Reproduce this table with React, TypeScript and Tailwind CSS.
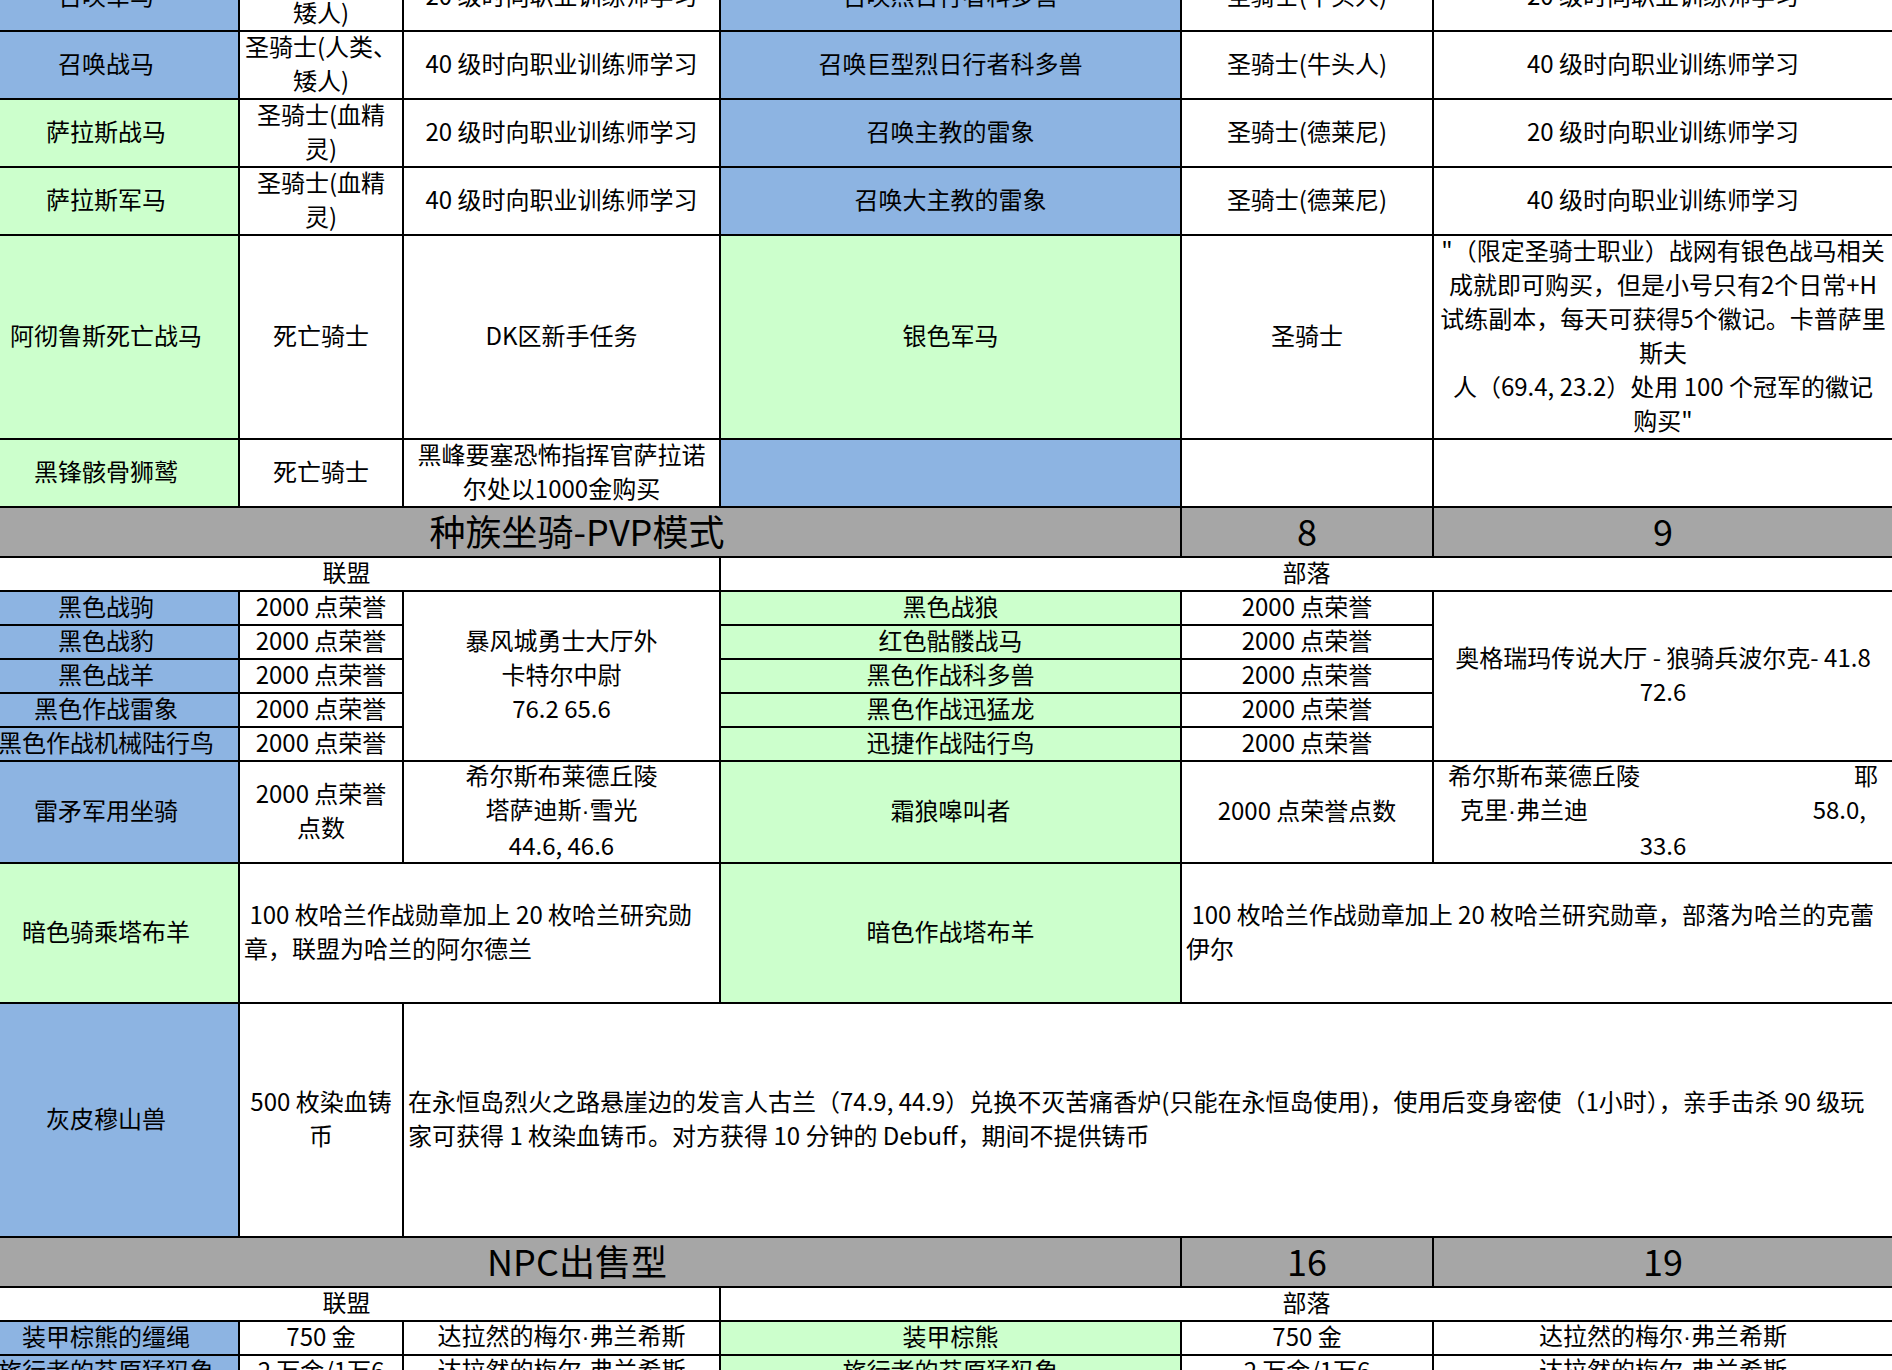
import type { ReactNode } from "react";

const BLUE = "bg-[#8db4e2]";
const GREEN = "bg-[#ccffcc]";
const GRAY = "bg-[#a6a6a6]";
const WHITE = "bg-white";

// the CJK font draws "·" full width; the sheet shows a narrow dot
function Text({ s }: { s: string }) {
  const parts = s.split("·");
  return (
    <>
      {parts.map((p, i) => (
        <span key={i}>
          {i > 0 && <span style={{ fontFamily: '"Liberation Sans", sans-serif' }}>·</span>}
          {p}
        </span>
      ))}
    </>
  );
}

type CellProps = {
  bg?: string;
  span?: string;
  left?: boolean;
  lines?: string[];
  children?: ReactNode;
};

// one sheet cell; lines are given explicitly so wrapping matches the sheet
function Cell({ bg = WHITE, span = "", left = false, lines, children }: CellProps) {
  const align = left ? "items-start text-left px-[4px]" : "items-center text-center px-[2px]";
  return (
    <div className={`${bg} ${span} flex flex-col justify-center overflow-hidden pb-[4px] ${align}`}>
      {lines
        ? lines.map((l, i) => (
            <span key={i} className="whitespace-pre leading-[34px]">
              <Text s={l} />
            </span>
          ))
        : children}
    </div>
  );
}

function Head({ span = "", children }: { span?: string; children: ReactNode }) {
  return (
    <div className={`${GRAY} ${span} flex items-center justify-center pb-[5px] text-[36px] leading-[44px]`}>
      {children}
    </div>
  );
}

const t = (s: string) => [s];

const honorRows: [string, string][] = [
  ["黑色战驹", "黑色战狼"],
  ["黑色战豹", "红色骷髅战马"],
  ["黑色战羊", "黑色作战科多兽"],
  ["黑色作战雷象", "黑色作战迅猛龙"],
  ["黑色作战机械陆行鸟", "迅捷作战陆行鸟"],
];

export default function App() {
  return (
    <div
      className="w-[1892px] h-[1370px] overflow-hidden bg-white text-black text-[24px]"
      style={{ fontFamily: '"Noto Sans CJK SC", "Noto Sans", sans-serif' }}
    >
      <div className="-mt-[36px] -ml-[26px] w-[1918px] grid gap-[2px] bg-black grid-cols-[264px_162px_315px_459px_250px_458px] grid-rows-[66px_66px_66px_66px_202px_66px_48px_32px_32px_32px_32px_32px_32px_100px_138px_232px_48px_32px_32px_32px]">
        {/* class mounts */}
        <Cell bg={BLUE} lines={t("召唤军马")} />
        <Cell lines={["圣骑士(人类、", "矮人)"]} />
        <Cell lines={t("20 级时向职业训练师学习")} />
        <Cell bg={BLUE} lines={t("召唤烈日行者科多兽")} />
        <Cell lines={t("圣骑士(牛头人)")} />
        <Cell lines={t("20 级时向职业训练师学习")} />

        <Cell bg={BLUE} lines={t("召唤战马")} />
        <Cell lines={["圣骑士(人类、", "矮人)"]} />
        <Cell lines={t("40 级时向职业训练师学习")} />
        <Cell bg={BLUE} lines={t("召唤巨型烈日行者科多兽")} />
        <Cell lines={t("圣骑士(牛头人)")} />
        <Cell lines={t("40 级时向职业训练师学习")} />

        <Cell bg={GREEN} lines={t("萨拉斯战马")} />
        <Cell lines={["圣骑士(血精", "灵)"]} />
        <Cell lines={t("20 级时向职业训练师学习")} />
        <Cell bg={BLUE} lines={t("召唤主教的雷象")} />
        <Cell lines={t("圣骑士(德莱尼)")} />
        <Cell lines={t("20 级时向职业训练师学习")} />

        <Cell bg={GREEN} lines={t("萨拉斯军马")} />
        <Cell lines={["圣骑士(血精", "灵)"]} />
        <Cell lines={t("40 级时向职业训练师学习")} />
        <Cell bg={BLUE} lines={t("召唤大主教的雷象")} />
        <Cell lines={t("圣骑士(德莱尼)")} />
        <Cell lines={t("40 级时向职业训练师学习")} />

        <Cell bg={GREEN} lines={t("阿彻鲁斯死亡战马")} />
        <Cell lines={t("死亡骑士")} />
        <Cell lines={t("DK区新手任务")} />
        <Cell bg={GREEN} lines={t("银色军马")} />
        <Cell lines={t("圣骑士")} />
        <Cell
          lines={[
            "\"（限定圣骑士职业）战网有银色战马相关",
            "成就即可购买，但是小号只有2个日常+H",
            "试练副本，每天可获得5个徽记。卡普萨里",
            "斯夫",
            "人（69.4, 23.2）处用 100 个冠军的徽记",
            "购买\"",
          ]}
        />

        <Cell bg={GREEN} lines={t("黑锋骸骨狮鹫")} />
        <Cell lines={t("死亡骑士")} />
        <Cell lines={["黑峰要塞恐怖指挥官萨拉诺", "尔处以1000金购买"]} />
        <Cell bg={BLUE} />
        <Cell />
        <Cell />

        {/* PvP */}
        <Head span="col-span-4">种族坐骑-PVP模式</Head>
        <Head>8</Head>
        <Head>9</Head>

        <Cell span="col-span-3" lines={t("联盟")} />
        <Cell span="col-span-3" lines={t("部落")} />

        {honorRows.map(([a, h], i) => (
          <HonorRow key={i} first={i === 0} alliance={a} horde={h} />
        ))}

        <Cell bg={BLUE} lines={t("雷矛军用坐骑")} />
        <Cell lines={["2000 点荣誉", "点数"]} />
        <Cell lines={["希尔斯布莱德丘陵", "塔萨迪斯·雪光", "44.6, 46.6"]} />
        <Cell bg={GREEN} lines={t("霜狼嗥叫者")} />
        <Cell lines={t("2000 点荣誉点数")} />
        <div className="bg-white flex flex-col justify-center pb-[4px] px-[14px] leading-[34px] whitespace-nowrap">
          <div className="flex justify-between">
            <span>希尔斯布莱德丘陵</span>
            <span>耶</span>
          </div>
          <div className="flex justify-between px-[12px]">
            <span>
              <Text s="克里·弗兰迪" />
            </span>
            <span>58.0,</span>
          </div>
          <div className="text-center">33.6</div>
        </div>

        <Cell bg={GREEN} lines={t("暗色骑乘塔布羊")} />
        <Cell
          span="col-span-2"
          left
          lines={[" 100 枚哈兰作战勋章加上 20 枚哈兰研究勋", "章，联盟为哈兰的阿尔德兰"]}
        />
        <Cell bg={GREEN} lines={t("暗色作战塔布羊")} />
        <Cell
          span="col-span-2"
          left
          lines={[" 100 枚哈兰作战勋章加上 20 枚哈兰研究勋章，部落为哈兰的克蕾", "伊尔"]}
        />

        <Cell bg={BLUE} lines={t("灰皮穆山兽")} />
        <Cell lines={["500 枚染血铸", "币"]} />
        <Cell
          span="col-span-4"
          left
          lines={[
            "在永恒岛烈火之路悬崖边的发言人古兰（74.9, 44.9）兑换不灭苦痛香炉(只能在永恒岛使用)，使用后变身密使（1小时），亲手击杀 90 级玩",
            "家可获得 1 枚染血铸币。对方获得 10 分钟的 Debuff，期间不提供铸币",
          ]}
        />

        {/* NPC vendors */}
        <Head span="col-span-4">NPC出售型</Head>
        <Head>16</Head>
        <Head>19</Head>

        <Cell span="col-span-3" lines={t("联盟")} />
        <Cell span="col-span-3" lines={t("部落")} />

        <Cell bg={BLUE} lines={t("装甲棕熊的缰绳")} />
        <Cell lines={t("750 金")} />
        <Cell lines={t("达拉然的梅尔·弗兰希斯")} />
        <Cell bg={GREEN} lines={t("装甲棕熊")} />
        <Cell lines={t("750 金")} />
        <Cell lines={t("达拉然的梅尔·弗兰希斯")} />

        <Cell bg={BLUE} lines={t("旅行者的苔原猛犸象")} />
        <Cell lines={t("2 万金/1万6")} />
        <Cell lines={t("达拉然的梅尔·弗兰希斯")} />
        <Cell bg={GREEN} lines={t("旅行者的苔原猛犸象")} />
        <Cell lines={t("2 万金/1万6")} />
        <Cell lines={t("达拉然的梅尔·弗兰希斯")} />
      </div>
    </div>
  );
}

function HonorRow({ first, alliance, horde }: { first: boolean; alliance: string; horde: string }) {
  return (
    <>
      <Cell bg={BLUE} lines={t(alliance)} />
      <Cell lines={t("2000 点荣誉")} />
      {first && <Cell span="row-span-5" lines={["暴风城勇士大厅外", "卡特尔中尉", "76.2 65.6"]} />}
      <Cell bg={GREEN} lines={t(horde)} />
      <Cell lines={t("2000 点荣誉")} />
      {first && <Cell span="row-span-5" lines={["奥格瑞玛传说大厅 - 狼骑兵波尔克- 41.8", "72.6"]} />}
    </>
  );
}
